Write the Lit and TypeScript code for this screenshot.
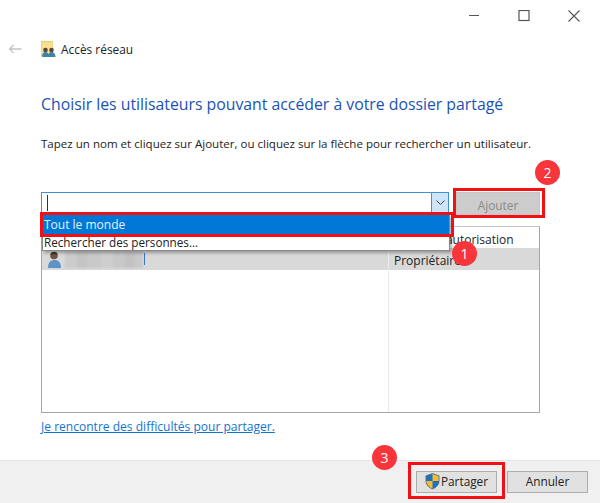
import { LitElement, html, css } from "lit";
import { customElement } from "lit/decorators.js";

@customElement("app-root")
export class AppRoot extends LitElement {
  static styles = css`
    :host { display: block; width: 600px; height: 503px; background: #fff; position: relative; overflow: hidden;
      font-family: "Open Sans", "Noto Sans", sans-serif; font-size: 11.5px; color: #222; }
    .page { display: flex; flex-direction: column; height: 503px; }
    .titlebar { height: 33px; display: flex; justify-content: flex-end; align-items: flex-start; padding: 10px 20px 0 0; gap: 38px; flex: none; box-sizing: border-box; }
    .titlebar svg { display: block; }
    .nav { height: 31px; display: flex; align-items: center; padding-left: 8px; flex: none; }
    .back { margin-right: 19px; }
    .navicon { margin-right: 5px; }
    .navtitle { font-size: 11.9px; color: #222; }
    .body { flex: 1; padding: 0 60px 0 41px; display: flex; flex-direction: column; min-height: 0; }
    h1 { margin: 27px 0 0; font-weight: 400; font-size: 15.8px; line-height: 26px; color: #1a52b8; white-space: nowrap; }
    .hint { margin: 18px 0 0; font-size: 11.55px; line-height: 18px; white-space: nowrap; color: #222; }
    .comborow { display: flex; gap: 7px; margin-top: 39px; height: 22px; flex: none; }
    .combo { flex: 1; border: 1px solid #3f92d8; display: flex; box-sizing: border-box; }
    .input { flex: 1; padding: 2px 0 0 5px; }
    .caret { width: 1px; height: 16px; background: #333; }
    .arrow { width: 16px; background: #cfe4f6; border-left: 1px solid #3f92d8; display: flex; align-items: center; justify-content: center; }
    .add { width: 84px; height: 23px; background: #cccccc; border: 1px solid #c4c4c4; color: #8a8a8a; font: inherit; font-size: 11.8px; padding: 2px 0 0; }
    .list { margin-top: 12px; height: 187px; box-sizing: border-box; border: 1px solid #a3a7ab; border-top-color: #c6c9cc; display: flex; flex-direction: column; flex: none; }
    .lhead { height: 21px; display: flex; flex: none; }
    .lrow { height: 22px; background: #d9d9d9; display: flex; flex: none; }
    .lrest { flex: 1; display: flex; }
    .c1 { width: 347px; box-sizing: border-box; border-right: 1px solid #e6eaf0; display: flex; align-items: center; padding-left: 5px; gap: 3px; }
    .c2 { flex: 1; display: flex; align-items: center; padding-left: 5px; white-space: nowrap; overflow: hidden; font-size: 12px; }
    .lhead .c2 { padding-top: 4px; box-sizing: border-box; }
    .lrow .c2 { padding-top: 2px; box-sizing: border-box; }
    .lrow .c1 { border-right-color: #ececec; }
    .redact { width: 78px; height: 17px; filter: blur(1.2px); display: flex; }
    .redact i { display: block; height: 100%; }
    .bar { width: 1px; height: 12px; background: #2a6fc0; margin-left: -2px; }
    .link { margin: 5px 0 0; font-size: 12.05px; line-height: 18px; color: #1573d0; text-decoration: underline; white-space: nowrap; }
    .footer { height: 43px; flex: none; background: #f0f0f0; border-top: 1px solid #e6e6e6; box-sizing: border-box; display: flex; justify-content: flex-end; gap: 10px; padding: 10px 12px 0 0; }
    .btn { width: 81px; height: 22px; box-sizing: border-box; background: #e1e1e1; border: 1px solid #adadad; font: inherit; font-size: 11.8px; color: #222; padding: 0 0 2px; display: flex; align-items: center; justify-content: center; }
    .share { padding-right: 1px; }
    .menu { position: absolute; left: 42px; top: 214px; width: 408px; height: 37px; background: #fff; box-sizing: border-box; border: 1px solid #8a8a8a; border-top: none; box-shadow: 2px 2px 3px rgba(0,0,0,.3); }
    .mi { height: 17px; line-height: 17px; padding-left: 1px; white-space: nowrap; font-size: 11.7px; }
    .mi.sel { height: 20px; line-height: 22px; font-size: 12px; background: #0078d7; color: #e8f2fb; }
    .hl { position: absolute; box-sizing: border-box; border: 3px solid #f30f14; }
    .h1 { left: 40px; top: 212px; width: 414px; height: 25px; }
    .h2 { left: 453px; top: 188px; width: 92px; height: 30px; }
    .h3 { left: 408px; top: 462px; width: 97px; height: 37px; }
    .badge { position: absolute; width: 25px; height: 25px; border-radius: 50%; background: #f7353a; color: #fff; font-size: 14px; display: flex; align-items: center; justify-content: center; }
    .b1 { left: 452px; top: 241px; }
    .b2 { left: 535px; top: 160px; }
    .b3 { left: 372px; top: 445px; }
  `;

  render() {
    const patches = [[12,"#cccccc"],[10,"#c4c4c4"],[14,"#c9c9c9"],[12,"#cecece"],[12,"#c8c8c8"],[10,"#c2c2c2"],[8,"#c9c9c9"]] as const;
    return html`
      <div class="page">
        <div class="titlebar">
          <svg width="12" height="12" viewBox="0 0 12 12"><path d="M1 5.5H11" stroke="#555" stroke-width="1"/></svg>
          <svg width="12" height="12" viewBox="0 0 12 12"><rect x="1" y=".5" width="10" height="10" fill="none" stroke="#555" stroke-width="1.2"/></svg>
          <svg width="12" height="12" viewBox="0 0 12 12"><path d="M.5 .5L11.5 11.5M11.5 .5L.5 11.5" stroke="#555" stroke-width="1.1"/></svg>
        </div>
        <div class="nav">
          <svg class="back" width="14" height="10" viewBox="0 0 14 10"><path d="M13.5 5H1.500M5.500 1L1.500 5L5.500 9" fill="none" stroke="#c4c4c4" stroke-width="1.3"/></svg>
          <svg class="navicon" width="15" height="16" viewBox="0 0 15 16">
            <rect x=".3" y=".3" width="11.500" height="14.500" fill="#fbe08f" stroke="#eac76a" stroke-width=".6"/>
            <path d="M1 .8H11" stroke="#d9b35a" stroke-width=".8" stroke-dasharray="1 1"/>
            <path d="M1 16c0-3.500 1.500-5 3.500-5s3.500 1.500 3.500 5zM7 16c0-3.500 1.500-5 3.500-5s4 1.500 4 5z" fill="#3f82ad"/>
            <circle cx="4.500" cy="9" r="2.300" fill="#54483c"/><circle cx="10.500" cy="9" r="2.300" fill="#54483c"/>
          </svg>
          <span class="navtitle">Accès réseau</span>
        </div>
        <div class="body">
          <h1>Choisir les utilisateurs pouvant accéder à votre dossier partagé</h1>
          <p class="hint">Tapez un nom et cliquez sur Ajouter, ou cliquez sur la flèche pour rechercher un utilisateur.</p>
          <div class="comborow">
            <div class="combo">
              <div class="input"><div class="caret"></div></div>
              <div class="arrow"><svg width="9" height="6" viewBox="0 0 9 6"><path d="M.5 .5L4.500 4.500L8.500 .5" fill="none" stroke="#444" stroke-width="1"/></svg></div>
            </div>
            <button class="add">Ajouter</button>
          </div>
          <div class="list">
            <div class="lhead"><div class="c1"></div><div class="c2">Niveau d'autorisation</div></div>
            <div class="lrow">
              <div class="c1">
                <svg width="15" height="18" viewBox="0 0 15 18"><path d="M1 18c0-5.500 2.500-8 6.500-8s6.500 2.500 6.500 8z" fill="#5d94c8"/><circle cx="7" cy="5.500" r="3.800" fill="#6e5240"/><path d="M3.500 5C4 1.500 9.500 1 10.500 4.500C8 3.500 6 4 3.500 5z" fill="#3f3026"/></svg>
                <div class="redact">${patches.map(([w, c]) => html`<i style="width:${w}px;background:${c}"></i>`)}</div><div class="bar"></div>
              </div>
              <div class="c2">Propriétaire</div>
            </div>
            <div class="lrest"><div class="c1"></div><div class="c2"></div></div>
          </div>
          <a class="link">Je rencontre des difficultés pour partager.</a>
        </div>
        <div class="footer">
          <button class="btn share">
            <svg width="17" height="18" viewBox="0 0 18 18">
              <path d="M9 1L16 3.500V9C16 13 13 16 9 17.500C5 16 2 13 2 9V3.500Z" fill="#1d6fc4" stroke="#6a6a6a" stroke-width=".7"/>
              <path d="M9 1.600L15.500 3.900V9H9ZM9 9V16.900C5.500 15.500 2.600 12.800 2.500 9Z" fill="#f5bd2c"/>
            </svg>Partager
          </button>
          <button class="btn">Annuler</button>
        </div>
      </div>
      <div class="menu">
        <div class="mi sel">Tout le monde</div>
        <div class="mi">Rechercher des personnes...</div>
      </div>
      <div class="hl h1"></div>
      <div class="hl h2"></div>
      <div class="hl h3"></div>
      <div class="badge b1">1</div>
      <div class="badge b2">2</div>
      <div class="badge b3">3</div>
    `;
  }
}
